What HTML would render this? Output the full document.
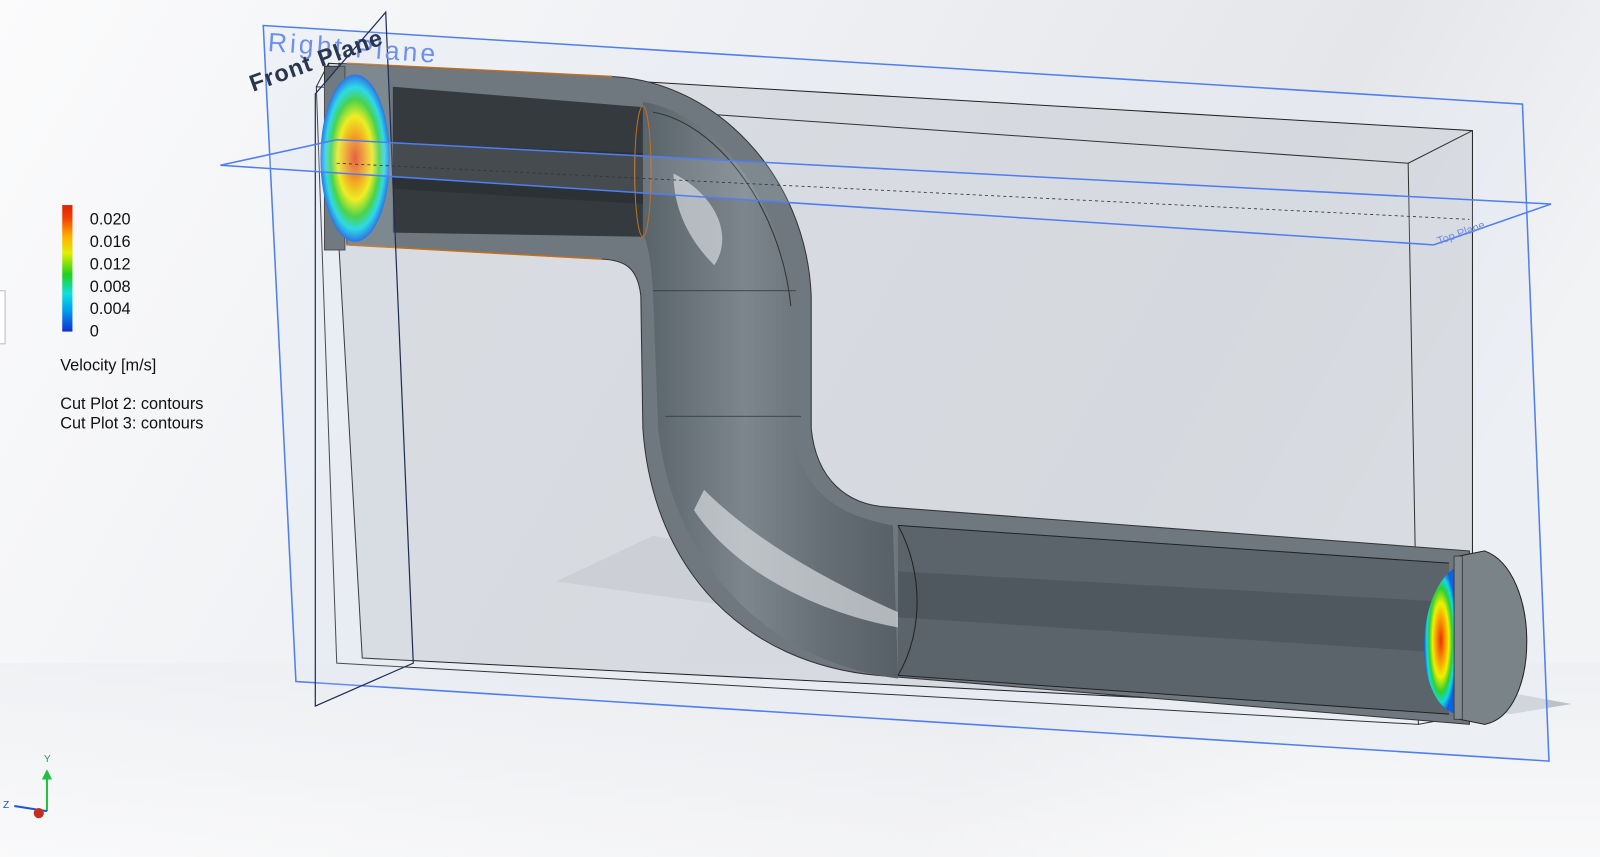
<!DOCTYPE html>
<html><head><style>
html,body{margin:0;padding:0;width:1600px;height:857px;overflow:hidden;background:#fff}
svg{position:absolute;left:0;top:0}
text{font-family:"Liberation Sans",sans-serif}
</style></head><body>
<svg width="1600" height="857" viewBox="0 0 1568 840" preserveAspectRatio="none">
<defs>
<linearGradient id="bg" x1="0" y1="0" x2="1" y2="0.3">
<stop offset="0" stop-color="#fbfbfc"/><stop offset="0.45" stop-color="#eef0f3"/><stop offset="0.8" stop-color="#e4e6ea"/><stop offset="1" stop-color="#f2f3f5"/>
</linearGradient>
<linearGradient id="floor" x1="0" y1="0" x2="0" y2="1">
<stop offset="0" stop-color="#eceef1"/><stop offset="1" stop-color="#fdfdfd"/>
</linearGradient>
<linearGradient id="cb" x1="0" y1="1" x2="0" y2="0">
<stop offset="0" stop-color="#1030d0"/><stop offset="0.17" stop-color="#00a0f0"/><stop offset="0.3" stop-color="#10e0e0"/><stop offset="0.45" stop-color="#20d020"/><stop offset="0.62" stop-color="#e0f000"/><stop offset="0.75" stop-color="#ffb000"/><stop offset="0.9" stop-color="#f04000"/><stop offset="1" stop-color="#e02000"/>
</linearGradient>
<radialGradient id="vel" cx="0.5" cy="0.5" r="0.5">
<stop offset="0" stop-color="#e83000"/><stop offset="0.3" stop-color="#f8a000"/><stop offset="0.5" stop-color="#f0f000"/><stop offset="0.7" stop-color="#30d030"/><stop offset="0.85" stop-color="#10d8e8"/><stop offset="1" stop-color="#1060e0"/>
</radialGradient>
<linearGradient id="elb" x1="0" y1="0" x2="1" y2="0">
<stop offset="0" stop-color="#59636a"/><stop offset="0.4" stop-color="#7c868c"/><stop offset="0.7" stop-color="#656f75"/><stop offset="1" stop-color="#566066"/>
</linearGradient>
</defs>
<rect width="1568" height="840" fill="url(#bg)"/>
<rect y="650" width="1568" height="190" fill="url(#floor)" opacity="0.6"/>
<polygon points="545,570 640,525 1540,690 1480,700" fill="#9aa0a6" opacity="0.6"/>
<polygon points="258,25 1492,102 1518,746 290,668" fill="#e6ebf3" fill-opacity="0.5" stroke="#4f7ef0" stroke-width="1.5"/>
<polygon points="322,62 1443,128 1443,700 355,645" fill="#c8ccd2" fill-opacity="0.55" stroke="#222" stroke-width="1"/>
<polygon points="310,85 1380,160 1390,710 330,650" fill="none" stroke="#333" stroke-width="1"/>
<line x1="310" y1="85" x2="322" y2="62" stroke="#333"/>
<line x1="1380" y1="160" x2="1443" y2="128" stroke="#333"/>
<line x1="1390" y1="710" x2="1443" y2="700" stroke="#333"/>
<path d="M332,62 L600,75 C700,80 790,170 795,290 L795,420 C800,470 830,495 870,497 L1440,540 L1440,710 L860,662 C730,650 640,560 630,420 L628,290 C625,262 612,255 590,254 L340,240 Z" fill="#6e787e" stroke="#333" stroke-width="1"/>
<path d="M630,100 C700,110 770,200 775,300 L778,420 C782,480 820,505 875,515 L880,665 C760,650 660,560 645,420 L640,290 C638,240 630,230 630,230 Z" fill="url(#elb)"/>
<path d="M640,110 C700,120 765,200 775,300" fill="none" stroke="#333" stroke-width="1"/>
<path d="M640,285 L780,285 M652,408 L785,408" stroke="#333" stroke-width="0.8" fill="none"/>
<path d="M660,170 C700,190 720,230 700,260 C680,240 660,210 660,170Z" fill="#c8cdd2" opacity="0.8"/>
<path d="M690,480 C730,520 790,560 880,600 L880,615 C800,600 720,560 680,500Z" fill="#d8dce0" opacity="0.7"/>
<polygon points="385,85 630,105 630,232 385,228" fill="#343a3e"/>
<polygon points="385,140 630,150 630,200 385,185" fill="#2c3134"/>
<ellipse cx="630" cy="168" rx="8" ry="64" fill="none" stroke="#c07020" stroke-width="1"/>
<line x1="340" y1="62" x2="600" y2="75" stroke="#c07020" stroke-width="1.5"/>
<line x1="340" y1="240" x2="590" y2="254" stroke="#c07020" stroke-width="1.5"/>
<polygon points="880,515 1420,552 1420,700 880,662" fill="#5a646a"/>
<polygon points="880,560 1420,590 1420,640 880,605" fill="#4f585e"/>
<path d="M880,515 C905,560 905,620 880,662" fill="none" stroke="#222"/>
<line x1="880" y1="515" x2="1420" y2="552" stroke="#222"/>
<line x1="880" y1="662" x2="1420" y2="700" stroke="#222"/>
<rect x="318" y="65" width="20" height="180" fill="#5f686e" stroke="#333"/>
<ellipse cx="348" cy="155" rx="34" ry="82" fill="url(#vel)"/>
<path d="M1430,545 L1455,540 C1510,560 1510,700 1455,710 L1430,705Z" fill="#7a8388" stroke="#222"/>
<path d="M1428,555 C1385,580 1385,690 1428,700Z" fill="url(#vel)"/>
<rect x="1425" y="545" width="8" height="160" fill="#808a90" stroke="#333" stroke-width="0.8"/>
<polygon points="309,92 378,12 405,650 309,692" fill="#dfe5ef" fill-opacity="0.15" stroke="#1f2d55" stroke-width="1.2"/>
<polygon points="216,162 330,137 1520,200 1405,240" fill="#dde4f2" fill-opacity="0.15" stroke="#4f7ef0" stroke-width="1.5"/>
<line x1="330" y1="160" x2="1440" y2="215" stroke="#333" stroke-dasharray="3,3" stroke-width="0.8"/>
<text x="262" y="50" font-size="26" fill="#6f90e8" letter-spacing="3" transform="rotate(4 262 50)">Right Plane</text>
<text x="248" y="90" font-size="23" font-weight="bold" fill="#2a3550" letter-spacing="1" transform="rotate(-20 248 90)">Front Plane</text>
<text x="1410" y="240" font-size="11" fill="#6f90e8" transform="rotate(-20 1410 240)">Top Plane</text>
<rect x="61" y="201" width="10" height="124" fill="url(#cb)"/>
<g font-size="16" fill="#111">
<text x="88" y="220">0.020</text><text x="88" y="242">0.016</text><text x="88" y="264">0.012</text><text x="88" y="286">0.008</text><text x="88" y="308">0.004</text><text x="88" y="330">0</text>
<text x="59" y="363">Velocity [m/s]</text>
<text x="59" y="401">Cut Plot 2: contours</text>
<text x="59" y="420">Cut Plot 3: contours</text>
</g>
<rect x="-5" y="285" width="10" height="52" fill="#fff" stroke="#bbb"/>
<line x1="46" y1="795" x2="46" y2="762" stroke="#20c040" stroke-width="2"/>
<polygon points="41,764 51,764 46,754" fill="#20c040"/>
<line x1="46" y1="795" x2="14" y2="790" stroke="#2050e0" stroke-width="2"/>
<circle cx="38" cy="797" r="5" fill="#c03020"/>
<text x="43" y="747" font-size="10" fill="#20a040">Y</text>
<text x="3" y="792" font-size="10" fill="#2050e0">Z</text>
</svg>
</body></html>
